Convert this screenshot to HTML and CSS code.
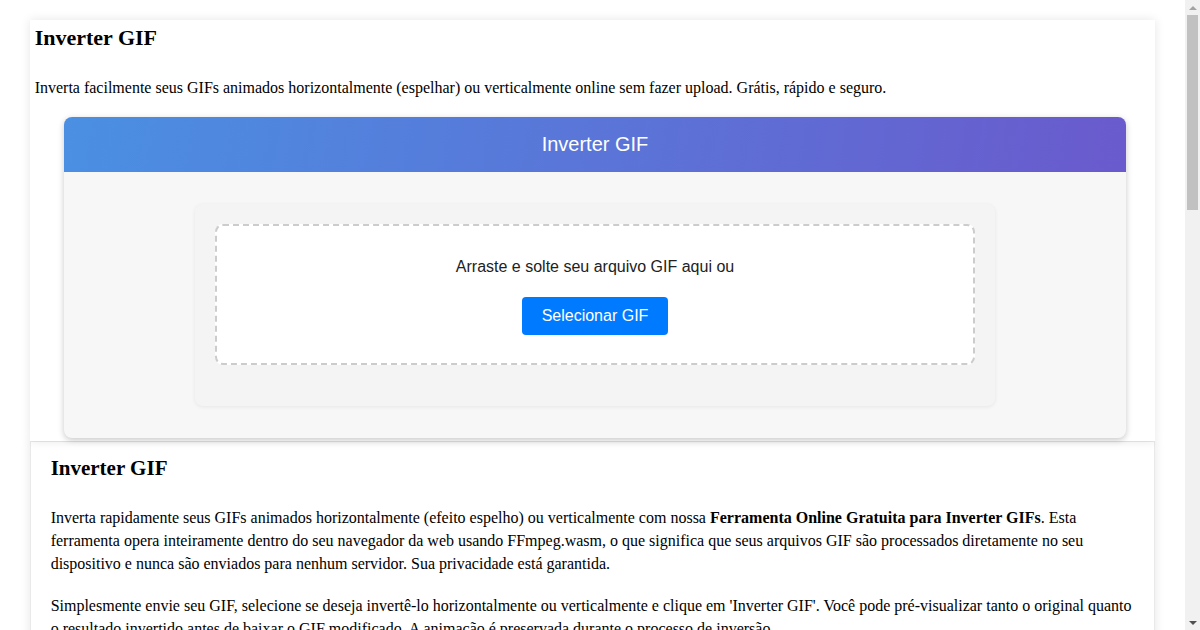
FILE: index.html
```html
<!DOCTYPE html>
<html lang="pt-BR">
<head>
<meta charset="utf-8">
<title>Inverter GIF</title>
<link rel="stylesheet" href="styles.css">
</head>
<body>
<div class="container">
  <h1 class="page-title">Inverter GIF</h1>
  <p class="intro">Inverta facilmente seus GIFs animados horizontalmente (espelhar) ou verticalmente online sem fazer upload. Grátis, rápido e seguro.</p>
  <div class="tool-card">
    <div class="tool-header">Inverter GIF</div>
    <div class="tool-body">
      <div class="upload-panel">
        <div class="drop-zone">
          <p class="drop-text">Arraste e solte seu arquivo GIF aqui ou</p>
          <button class="select-btn" type="button">Selecionar GIF</button>
        </div>
      </div>
    </div>
  </div>
</div>
<section class="article">
  <h2 class="article-title">Inverter GIF</h2>
  <p>Inverta rapidamente seus GIFs animados horizontalmente (efeito espelho) ou verticalmente com nossa <strong>Ferramenta Online Gratuita para Inverter GIFs</strong>. Esta ferramenta opera inteiramente dentro do seu navegador da web usando FFmpeg.wasm, o que significa que seus arquivos GIF são processados diretamente no seu dispositivo e nunca são enviados para nenhum servidor. Sua privacidade está garantida.</p>
  <p>Simplesmente envie seu GIF, selecione se deseja invertê-lo horizontalmente ou verticalmente e clique em 'Inverter GIF'. Você pode pré-visualizar tanto o original quanto o resultado invertido antes de baixar o GIF modificado. A animação é preservada durante o processo de inversão.</p>
  <h3>Como inverter um GIF</h3>
  <ol>
    <li>Arraste e solte seu arquivo GIF na área de envio ou clique em "Selecionar GIF".</li>
    <li>Escolha a direção da inversão: horizontal (espelhar) ou vertical.</li>
    <li>Clique em "Inverter GIF" e aguarde o processamento no seu navegador.</li>
    <li>Pré-visualize o resultado e clique em "Baixar" para salvar o GIF invertido.</li>
  </ol>
  <h3>Por que usar nossa ferramenta?</h3>
  <ul>
    <li><strong>100% privado:</strong> seus arquivos nunca saem do seu dispositivo.</li>
    <li><strong>Gratuito:</strong> sem limites, sem marcas d'água e sem cadastro.</li>
    <li><strong>Rápido:</strong> o processamento acontece localmente, sem esperar por uploads.</li>
    <li><strong>Preserva a animação:</strong> todos os quadros e tempos são mantidos.</li>
  </ul>
  <h3>Perguntas frequentes</h3>
  <p><strong>A inversão reduz a qualidade do GIF?</strong><br>Não. A ferramenta apenas espelha os quadros, mantendo as cores e a resolução originais sempre que possível.</p>
  <p><strong>Posso inverter GIFs grandes?</strong><br>Sim, mas arquivos muito grandes podem levar mais tempo, pois todo o processamento é feito no seu navegador.</p>
  <p><strong>Funciona no celular?</strong><br>Sim. A ferramenta funciona em navegadores modernos de computadores, tablets e smartphones.</p>
  <p><strong>Meus arquivos são armazenados?</strong><br>Não. Nenhum arquivo é enviado ou armazenado em servidores. Tudo acontece localmente no seu dispositivo.</p>
</section>
<div class="scrollbar" aria-hidden="true">
  <span class="scroll-arrow scroll-up"></span>
  <span class="scroll-thumb"></span>
  <span class="scroll-arrow scroll-down"></span>
</div>
</body>
</html>
```

FILE: styles.css
```css
html, body {
  padding: 0;
  background: #ffffff;
}

html {
  margin: 0;
}

body {
  margin: 0 15px 0 0;
  font-family: "Liberation Serif", "Times New Roman", serif;
  font-size: 16px;
  color: #000;
}

.container {
  position: relative;
  z-index: 1;
  width: 95%;
  margin: 20px auto 0;
  padding: 5px 5px 3px;
  box-sizing: border-box;
  background: #fff;
  box-shadow: 0 0 10px rgba(0, 0, 0, 0.1);
}

.page-title {
  font-size: 22px;
  font-weight: bold;
  margin: 0 0 28px;
}

.intro {
  margin: 0 0 20px;
}

.tool-card {
  margin: 0 24px 0 29px;
  border-radius: 8px;
  overflow: hidden;
  background: #f7f7f7;
  box-shadow: 0 2px 6px rgba(0, 0, 0, 0.22);
  font-family: "Liberation Sans", Arial, sans-serif;
}

.tool-header {
  padding: 16px;
  text-align: center;
  font-size: 20px;
  color: #fff;
  background: linear-gradient(100deg, #4a90e2, #6a5acd);
}

.tool-body {
  padding: 32px 0 32px;
}

.upload-panel {
  width: 800px;
  margin: 0 auto;
  padding: 20px 20px 41px;
  box-sizing: border-box;
  background: #f4f4f4;
  border-radius: 8px;
  box-shadow: 0 1px 4px rgba(0, 0, 0, 0.07);
}

.drop-zone {
  display: flex;
  flex-direction: column;
  align-items: center;
  padding: 32px 20px 28px;
  border: 2px dashed #cccccc;
  border-radius: 8px;
  background: #fff;
}

.drop-text {
  margin: 0 0 21px;
  font-size: 16px;
  color: #222;
}

.select-btn {
  font-family: "Liberation Sans", Arial, sans-serif;
  font-size: 16px;
  line-height: 18px;
  color: #fff;
  background: #007bff;
  border: none;
  border-radius: 4px;
  padding: 10px 20px;
}

.article {
  width: 95%;
  margin: 0 auto 20px;
  padding: 14px 20px 20px;
  box-sizing: border-box;
  min-height: 1480px;
  background: #fff;
  border: 1px solid #e9e9e9;
  box-shadow: 0 0 10px rgba(0, 0, 0, 0.1);
}

.article-title {
  font-size: 21px;
  margin: 0 0 26px;
}

.article p,
.article li {
  line-height: 1.43;
}

.article p {
  margin: 0 0 19px;
}

.article h3 {
  font-size: 18px;
  margin: 24px 0 12px;
}

.article ol,
.article ul {
  margin: 0 0 19px;
  padding-left: 30px;
}

/* Simulated classic browser scrollbar overlaid on the right edge */
.scrollbar {
  position: fixed;
  top: 0;
  right: 0;
  bottom: 0;
  width: 15px;
  z-index: 10;
  display: flex;
  flex-direction: column;
  align-items: center;
  background: #f1f1f1;
}

.scroll-arrow {
  flex: 0 0 15px;
  width: 15px;
  display: flex;
  align-items: center;
  justify-content: center;
}

.scroll-arrow::before {
  content: "";
  width: 0;
  height: 0;
  border-left: 4px solid transparent;
  border-right: 4px solid transparent;
}

.scroll-up::before {
  border-bottom: 4px solid #a3a3a3;
}

.scroll-down {
  margin-top: auto;
}

.scroll-down::before {
  border-top: 4px solid #505050;
}

.scroll-thumb {
  width: 11px;
  height: 195px;
  background: #c1c1c1;
}
```
